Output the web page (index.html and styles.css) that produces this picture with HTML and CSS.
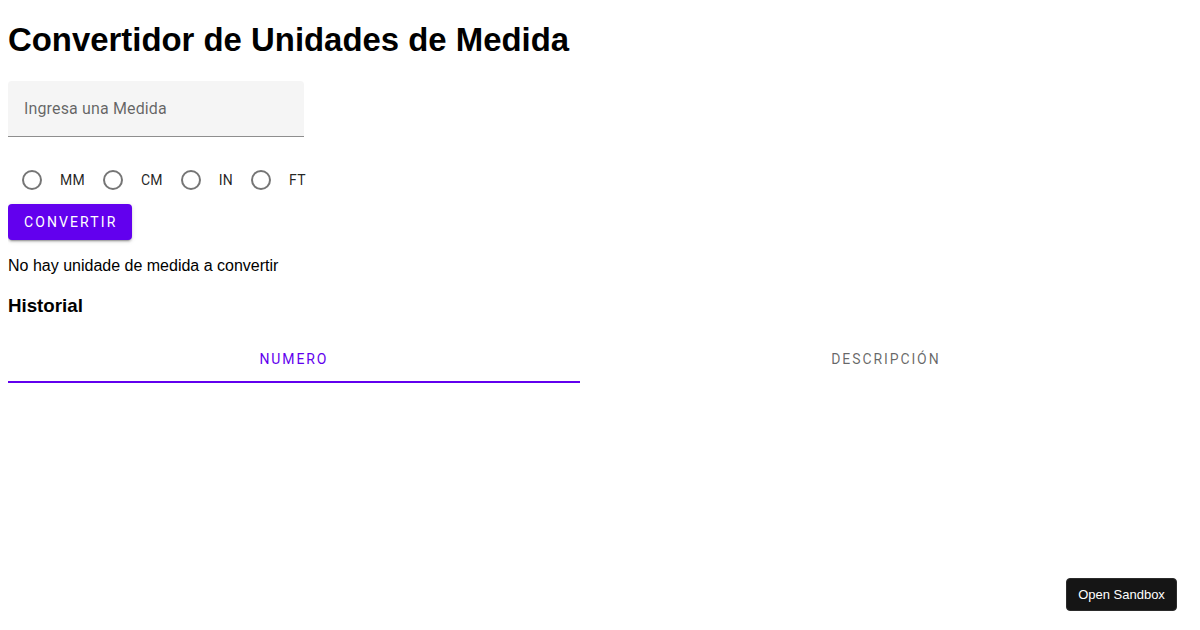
FILE: index.html
```html
<!DOCTYPE html>
<html lang="es">
<head>
<meta charset="utf-8">
<title>Convertidor de Unidades de Medida</title>
<link rel="stylesheet" href="styles.css">
</head>
<body>
<h1 class="title">Convertidor de Unidades de Medida</h1>
<div class="field">
  <span class="field-label">Ingresa una Medida</span>
</div>
<div class="radios">
  <label class="radio"><span class="ring"></span><span class="radio-text">MM</span></label>
  <label class="radio"><span class="ring"></span><span class="radio-text">CM</span></label>
  <label class="radio"><span class="ring"></span><span class="radio-text">IN</span></label>
  <label class="radio"><span class="ring"></span><span class="radio-text">FT</span></label>
</div>
<button class="btn">Convertir</button>
<p class="message">No hay unidade de medida a convertir</p>
<h3 class="subtitle">Historial</h3>
<div class="tabs">
  <div class="tab tab-active"><span class="tab-text">Numero</span><span class="indicator"></span></div>
  <div class="tab"><span class="tab-text">Descripción</span></div>
</div>
<button class="sandbox">Open Sandbox</button>
</body>
</html>
```
FILE: styles.css
```css
html, body { background: #fff; }
body {
  margin: 0 8px 8px;
  font-family: "Liberation Sans", Arial, sans-serif;
  font-size: 16px;
  color: #000;
}
.title {
  font-size: 32.9px;
  font-weight: bold;
  margin: 21px 0 22px;
  line-height: 38px;
}
.field {
  height: 55px;
  background: #f5f5f5;
  border-radius: 4px 4px 0 0;
  border-bottom: 1px solid rgba(0,0,0,0.42);
  display: flex;
  align-items: center;
  padding-left: 16px;
  box-sizing: content-box;
  width: 280px;
}
.field-label {
  font-family: Roboto, sans-serif;
  font-size: 16px;
  color: rgba(0,0,0,0.6);
  letter-spacing: 0.009em;
  margin-top: -1px;
}
.radios {
  display: flex;
  align-items: center;
  height: 40px;
  margin-top: 23px;
  padding-left: 14px;
  gap: 18px;
}
.radio {
  display: flex;
  align-items: center;
  gap: 18px;
  font-family: Roboto, sans-serif;
  font-size: 14px;
  color: rgba(0,0,0,0.87);
  letter-spacing: 0.0178em;
}
.ring {
  width: 20px;
  height: 20px;
  box-sizing: border-box;
  border: 2px solid rgba(0,0,0,0.54);
  border-radius: 50%;
}
.btn {
  display: block;
  margin-top: 4px;
  height: 36px;
  padding: 0 15px 0 16px;
  border: none;
  border-radius: 4px;
  background: #6200ee;
  color: #fff;
  font-family: Roboto, sans-serif;
  font-size: 14px;
  font-weight: 400;
  letter-spacing: 2.1px;
  text-transform: uppercase;
  box-shadow: 0 3px 1px -2px rgba(0,0,0,.2), 0 2px 2px 0 rgba(0,0,0,.14), 0 1px 5px 0 rgba(0,0,0,.12);
}
.message {
  margin: 17px 0 16px;
  line-height: 18px;
}
.subtitle {
  font-size: 18.72px;
  font-weight: bold;
  margin: 19.7px 0 18px;
  line-height: 22px;
}
.tabs {
  display: flex;
}
.tab {
  flex: 1 0 auto;
  height: 48px;
  padding: 0 24px;
  display: flex;
  align-items: center;
  justify-content: center;
  position: relative;
  font-family: Roboto, sans-serif;
  font-size: 14px;
  font-weight: 400;
  letter-spacing: 1.9px;
  text-transform: uppercase;
  color: rgba(0,0,0,0.6);
}
.tab-active { color: #6200ee; }
.indicator {
  position: absolute;
  left: 0;
  right: 0;
  bottom: 0;
  height: 2px;
  background: #6200ee;
}
.sandbox {
  position: fixed;
  right: 23px;
  bottom: 19px;
  width: 111px;
  height: 33px;
  background: #151515;
  color: #fff;
  border: 1px solid #2b2b2b;
  border-radius: 4px;
  font-family: "Liberation Sans", Arial, sans-serif;
  font-size: 13px;
  padding: 0;
}
```
